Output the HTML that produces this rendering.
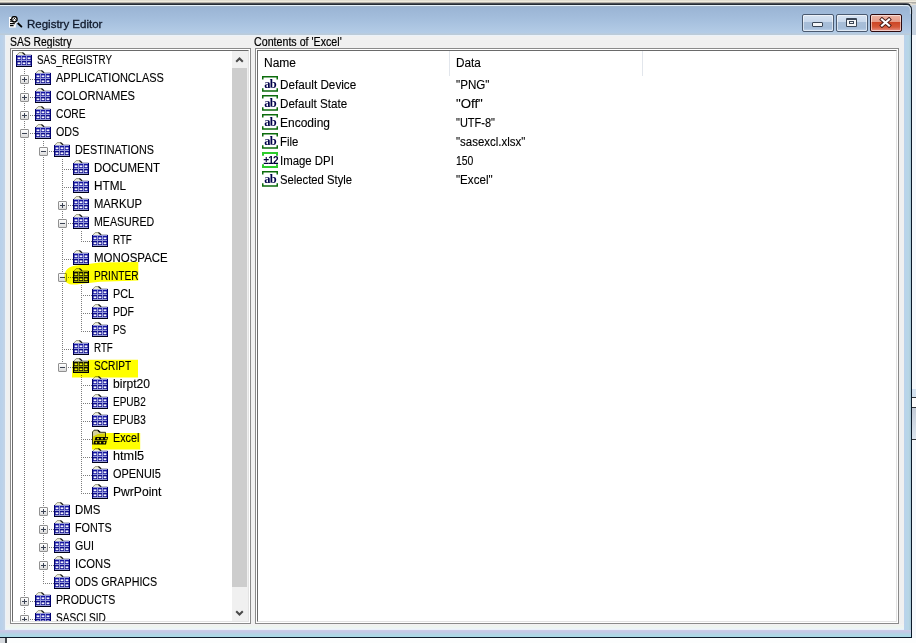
<!DOCTYPE html>
<html><head><meta charset="utf-8">
<style>
*{margin:0;padding:0;box-sizing:border-box}
html,body{width:916px;height:643px;overflow:hidden;background:#fbfdfe;font-family:"Liberation Sans",sans-serif}
.a{position:absolute}
#top{left:0;top:0;width:916px;height:6px;background:linear-gradient(#e2ded2 0px,#e2ded2 1px,#f0ecdf 1px,#f0ecdf 2px,#b4b0a8 2px,#b4b0a8 3px,#4a4e56 3px,#4a4e56 4px,#242a32 4px,#242a32 5px,#e8f4fc 5px)}
#frame{left:0;top:5px;width:912px;height:633px;background:linear-gradient(90deg,#b8d0ea 0,#bcd2ea 3px,#c4d2e4 4px,#c4d2e4 5px,transparent 5px)}
#title{left:0;top:5px;width:911px;height:30px;background:linear-gradient(#e8f4fc 0,#e8f4fc 1px,#a2b6cc 1px,#9bb5d5 3px,#a6c0de 16px,#b4cce6 28px,#bccbd8 29px,#bccbd8 30px)}
#rframe{left:904px;top:35px;width:7px;height:595px;background:linear-gradient(90deg,#c0d0e8 0,#b8d4ec 1px,#b8d6e4 5px,#a4c4d4 7px)}
#bframe{left:0;top:630px;width:911px;height:7px;background:linear-gradient(#cccce8 0,#c4c8e6 2px,#b4d4e6 4px,#a8dae6 7px)}
#rborder{left:911px;top:4px;width:1px;height:634px;background:#0c1a2a}
#bborder{left:0;top:637px;width:912px;height:1px;background:#0c1a2a}
#client{left:5px;top:35px;width:899px;height:595px;background:#f0f0f0;border-top:1px solid #eaf2fa;border-left:1px solid #e8f2fc}
.lbl{font-size:12px;color:#000;line-height:18px;white-space:nowrap;transform-origin:0 0;-webkit-text-stroke:0.2px #000}
.box{background:#fff;border:1px solid #8a8a8a}
.inner{position:absolute;left:1px;top:1px;right:1px;bottom:1px;border-top:1px solid #6a6a6a;border-left:1px solid #6a6a6a;border-right:1px solid #e3e3e3;border-bottom:1px solid #e3e3e3;background:#fff}
.t{position:absolute;font-size:12px;line-height:18px;white-space:nowrap;color:#000;transform-origin:0 0;-webkit-text-stroke:0.12px #000}
.r{position:absolute;font-size:12px;line-height:18px;white-space:nowrap;color:#000;transform-origin:0 0;-webkit-text-stroke:0.12px #000}
#treeclip{left:13px;top:51px;width:219px;height:570px;overflow:hidden}
#treeoff{position:absolute;left:-13px;top:-51px;width:300px;height:700px}
.vl{position:absolute;width:1px;background:repeating-linear-gradient(#7c7c7c 0,#7c7c7c 1px,transparent 1px,transparent 2px)}
.hl{position:absolute;height:1px;background:repeating-linear-gradient(90deg,#7c7c7c 0,#7c7c7c 1px,transparent 1px,transparent 2px)}
.exp{position:absolute;width:9px;height:9px;border:1px solid #919191;border-radius:1px;background:linear-gradient(#ffffff,#dcdcdc)}
.eh{position:absolute;left:1px;top:3px;width:5px;height:1px;background:#3a4252}
.ev{position:absolute;left:3px;top:1px;width:1px;height:5px;background:#3a4252}
.icw{position:absolute;line-height:0}
.ic{display:block}
#sb{left:232px;top:51px;width:16px;height:570px;background:#f0f0f0}
#thumb{left:232px;top:68px;width:15px;height:519px;background:#cdcdcd}
.btn{position:absolute;top:14px;height:18px;border:1px solid #4a5a70;border-radius:2px;box-shadow:inset 0 0 0 1px rgba(255,255,255,0.55)}
</style></head><body>
<svg width="0" height="0" style="position:absolute"><symbol id="ic" viewBox="0 0 16 15"><path d="M0.5 3.5 L3.2 0.6 L6.6 0.6 L9.5 3.2 Z" fill="#eeeedc"/><path d="M0.6 3.4 L3.2 0.6 L6.6 0.6" fill="none" stroke="#8c8c74" stroke-width="0.9"/><path d="M6.4 0.5 L9.6 3.3" stroke="#181818" stroke-width="1.3" fill="none"/><path d="M9.5 2.5 H15.5" stroke="#c4c4cc" stroke-width="1"/><rect x="0" y="3" width="16" height="12" fill="#00006e"/><rect x="1" y="3" width="14" height="11" fill="#9498d8"/><rect x="1" y="4" width="4" height="4" fill="#1414a0"/><rect x="6" y="4" width="4" height="4" fill="#1414a0"/><rect x="11" y="4" width="4" height="4" fill="#1414a0"/><rect x="1" y="9" width="4" height="4" fill="#0e0e8c"/><rect x="6" y="9" width="4" height="4" fill="#0e0e8c"/><rect x="11" y="9" width="4" height="4" fill="#0e0e8c"/><rect x="1.6" y="5.4" width="2.8" height="1.8" fill="#f4f4fc"/><rect x="6.6" y="5.4" width="2.8" height="1.8" fill="#f4f4fc"/><rect x="11.6" y="5.4" width="2.8" height="1.8" fill="#f4f4fc"/><rect x="1.6" y="10.4" width="2.8" height="1.8" fill="#f4f4fc"/><rect x="6.6" y="10.4" width="2.8" height="1.8" fill="#f4f4fc"/><rect x="11.6" y="10.4" width="2.8" height="1.8" fill="#f4f4fc"/><rect x="0" y="14" width="16" height="1" fill="#000018"/></symbol><symbol id="fo" viewBox="0 0 17 16"><path d="M0.5 15.5 V3 L2 1.2 H5.8 L8 3.3 H13.5 V8" fill="#d6d29c" stroke="#34341c" stroke-width="1"/><path d="M5.8 1.2 L8 3.3" stroke="#000" stroke-width="1.4"/><path d="M3.6 8 H16.2 L15.2 11.2 H2.6 Z" fill="#06062a"/><path d="M2.2 12 H14.8 L14 15.5 H1.2 Z" fill="#06062a"/><path d="M2.6 11.6 H15" stroke="#8a8a50" stroke-width="0.8"/><circle cx="6" cy="9.6" r="0.9" fill="#f4f4e8"/><circle cx="10" cy="9.6" r="0.9" fill="#f4f4e8"/><circle cx="14" cy="9.6" r="0.9" fill="#f4f4e8"/><circle cx="4.3" cy="13.6" r="0.9" fill="#f4f4e8"/><circle cx="8.3" cy="13.6" r="0.9" fill="#f4f4e8"/><circle cx="12.3" cy="13.6" r="0.9" fill="#f4f4e8"/></symbol><symbol id="ab" viewBox="0 0 16 16"><path d="M0.75 3.6 V0.75 H15.25 V3.6" fill="none" stroke="#0c6c0c" stroke-width="1.5"/><path d="M0.75 12.2 V15 H15.25 V12.2" fill="none" stroke="#0c6c0c" stroke-width="1.5"/><text x="8.2" y="11.8" text-anchor="middle" font-family="Liberation Serif" font-weight="bold" font-size="12.5" fill="#00004a" letter-spacing="-0.7">ab</text></symbol><symbol id="num" viewBox="0 0 16 16"><path d="M1 3.8 V1 H15 V3.8" fill="none" stroke="#2ccc2c" stroke-width="2"/><path d="M1 12.2 V15 H15 V12.2" fill="none" stroke="#2ccc2c" stroke-width="2"/><text x="8.6" y="11.6" text-anchor="middle" font-family="Liberation Sans" font-weight="bold" font-size="10" fill="#000038" letter-spacing="-0.8">&#177;12</text></symbol></svg>
<div id="top" class="a"></div>
<div id="frame" class="a"></div>
<div id="title" class="a"></div>
<div id="rframe" class="a"></div>
<div id="bframe" class="a"></div>
<div id="rborder" class="a"></div>
<div id="bborder" class="a"></div>
<div id="client" class="a"></div>
<div class="a" style="left:6px;top:624px;width:898px;height:6px;background:linear-gradient(#f4f0f4 0,#eef4ee 2px,#eef6f0 3px,#eef4fa 5px,#e6eefa 6px)"></div>
<div class="a" style="left:912px;top:5px;width:4px;height:30px;background:#c6d2e0"></div>
<div class="a" style="left:912px;top:35px;width:4px;height:603px;background:#f6f9fc"></div>
<div class="a" style="left:912px;top:389px;width:4px;height:9px;background:#d4e2f0"></div>
<div class="a" style="left:912px;top:397px;width:4px;height:1px;background:#303438"></div>
<div class="a" style="left:912px;top:398px;width:4px;height:9px;background:#fcfcfc"></div>
<div class="a" style="left:912px;top:407px;width:4px;height:1px;background:#303438"></div>
<div class="a" style="left:912px;top:408px;width:4px;height:31px;background:linear-gradient(#c4ccd8,#dce6f0)"></div>
<div class="a" style="left:912px;top:439px;width:4px;height:1px;background:#303438"></div>
<div class="a" style="left:0;top:638px;width:5px;height:5px;background:#d6dadf"></div>
<div class="a" style="left:5px;top:638px;width:2px;height:5px;background:#45494e"></div>
<div class="a" style="left:7px;top:638px;width:909px;height:5px;background:#fdfefe"></div>

<svg class="a" style="left:903px;top:0px" width="13" height="14" viewBox="0 0 13 14">
<path d="M0 3 H3 Q8.5 3 8.5 8.5 V14 H13 V3 Z" fill="#e4e0d6"/>
<path d="M8.6 5 V14 H13 V5 Z" fill="#c6d2e0"/>
<path d="M8.6 3 H13" stroke="#a8a8a4" stroke-width="1"/>
<path d="M0 4.5 H3 Q8.5 4.5 8.5 10 V14" fill="none" stroke="#18202a" stroke-width="1.2"/>
<path d="M0 5.6 H3 Q7.4 5.6 7.4 10 V14" fill="none" stroke="#dceaf6" stroke-width="0.9"/>
</svg>
<!-- title icon -->
<svg class="a" style="left:9px;top:16px" width="14" height="12" viewBox="0 0 14 12">
<rect x="0" y="1" width="6.8" height="10.6" fill="#fcfcfc"/>
<path d="M1 3.6 H2.2 M1 5.3 H3 M1 7.6 H5.8 M1 9.6 H4.6" stroke="#000" stroke-width="1.1"/>
<circle cx="5.4" cy="3.3" r="2.7" fill="#fafafa" stroke="#000" stroke-width="1.3"/>
<circle cx="4.3" cy="3.7" r="0.55" fill="#000"/><circle cx="6.5" cy="3.7" r="0.55" fill="#000"/><circle cx="5.4" cy="2.4" r="0.55" fill="#000"/>
<path d="M8.9 7.3 L12.4 10.6" stroke="#000" stroke-width="1.9" stroke-linecap="round"/>
<path d="M7.4 5.9 L8.7 7.1" stroke="#e8eef4" stroke-width="1.4"/>
</svg>
<div class="a" style="left:27px;top:14.5px;font-size:11.5px;line-height:18px;color:#101a2c;white-space:nowrap;-webkit-text-stroke:0.3px #101a2c">Registry Editor</div>

<!-- window buttons -->
<div class="btn" style="left:802px;width:32px;background:linear-gradient(#d8e4f2 0,#c8d8ec 7px,#a8bed8 7px,#a4bcd8 13px,#c0d4ec 16px)"></div>
<div class="btn" style="left:836px;width:32px;background:linear-gradient(#d8e4f2 0,#c8d8ec 7px,#a8bed8 7px,#a4bcd8 13px,#c0d4ec 16px)"></div>
<div class="btn" style="left:870px;width:32px;border-color:#2c0a0e;background:linear-gradient(#eeb4a4 0,#e49a86 7px,#cc4424 7px,#d45838 12px,#e8948a 16px)"></div>
<div class="a" style="left:812px;top:22px;width:11px;height:5px;border:1px solid #3a4656;border-radius:1px;background:#f4f6f8"></div>
<div class="a" style="left:846px;top:18px;width:11px;height:9px;border:1px solid #3a4656;border-top-width:2px;border-radius:1px;background:#f4f6f8"><div class="a" style="left:2px;top:1px;width:5px;height:3px;border:1px solid #3a4656"></div></div>
<svg class="a" style="left:879px;top:17px" width="13" height="11" viewBox="0 0 13 11">
<path d="M3 2.5 L10 8.5 M10 2.5 L3 8.5" stroke="#4a1a14" stroke-width="4" stroke-linecap="square"/>
<path d="M3 2.5 L10 8.5 M10 2.5 L3 8.5" stroke="#ffffff" stroke-width="2.2" stroke-linecap="square"/>
</svg>

<!-- labels -->
<div class="a lbl" style="left:10px;top:33px;transform:scaleX(0.863)">SAS Registry</div>
<div class="a lbl" style="left:254px;top:33px;transform:scaleX(0.889)">Contents of 'Excel'</div>

<!-- left box -->
<div class="a box" style="left:10px;top:48px;width:241px;height:576px"><div class="inner"></div></div>
<!-- right box -->
<div class="a box" style="left:255px;top:48px;width:644px;height:576px"><div class="inner"></div></div>

<!-- tree -->
<div id="treeclip" class="a"><div id="treeoff">
<div class="vl" style="left:24px;top:69px;height:632px"></div>
<div class="vl" style="left:43px;top:141px;height:443px"></div>
<div class="vl" style="left:62px;top:159px;height:209px"></div>
<div class="vl" style="left:81px;top:231px;height:11px"></div>
<div class="vl" style="left:81px;top:285px;height:47px"></div>
<div class="vl" style="left:81px;top:375px;height:119px"></div>
<div class="hl" style="left:26px;top:79px;width:9px"></div>
<div class="exp" style="left:20px;top:75px"><div class="eh"></div><div class="ev"></div></div>
<div class="hl" style="left:26px;top:97px;width:9px"></div>
<div class="exp" style="left:20px;top:93px"><div class="eh"></div><div class="ev"></div></div>
<div class="hl" style="left:26px;top:115px;width:9px"></div>
<div class="exp" style="left:20px;top:111px"><div class="eh"></div><div class="ev"></div></div>
<div class="hl" style="left:26px;top:133px;width:9px"></div>
<div class="exp" style="left:20px;top:129px"><div class="eh"></div></div>
<div class="hl" style="left:45px;top:151px;width:9px"></div>
<div class="exp" style="left:39px;top:147px"><div class="eh"></div></div>
<div class="hl" style="left:64px;top:169px;width:9px"></div>
<div class="hl" style="left:64px;top:187px;width:9px"></div>
<div class="hl" style="left:64px;top:205px;width:9px"></div>
<div class="exp" style="left:58px;top:201px"><div class="eh"></div><div class="ev"></div></div>
<div class="hl" style="left:64px;top:223px;width:9px"></div>
<div class="exp" style="left:58px;top:219px"><div class="eh"></div></div>
<div class="hl" style="left:83px;top:241px;width:9px"></div>
<div class="hl" style="left:64px;top:259px;width:9px"></div>
<div class="hl" style="left:64px;top:277px;width:9px"></div>
<div class="exp" style="left:58px;top:273px"><div class="eh"></div></div>
<div class="hl" style="left:83px;top:295px;width:9px"></div>
<div class="hl" style="left:83px;top:313px;width:9px"></div>
<div class="hl" style="left:83px;top:331px;width:9px"></div>
<div class="hl" style="left:64px;top:349px;width:9px"></div>
<div class="hl" style="left:64px;top:367px;width:9px"></div>
<div class="exp" style="left:58px;top:363px"><div class="eh"></div></div>
<div class="hl" style="left:83px;top:385px;width:9px"></div>
<div class="hl" style="left:83px;top:403px;width:9px"></div>
<div class="hl" style="left:83px;top:421px;width:9px"></div>
<div class="hl" style="left:83px;top:439px;width:9px"></div>
<div class="hl" style="left:83px;top:457px;width:9px"></div>
<div class="hl" style="left:83px;top:475px;width:9px"></div>
<div class="hl" style="left:83px;top:493px;width:9px"></div>
<div class="hl" style="left:45px;top:511px;width:9px"></div>
<div class="exp" style="left:39px;top:507px"><div class="eh"></div><div class="ev"></div></div>
<div class="hl" style="left:45px;top:529px;width:9px"></div>
<div class="exp" style="left:39px;top:525px"><div class="eh"></div><div class="ev"></div></div>
<div class="hl" style="left:45px;top:547px;width:9px"></div>
<div class="exp" style="left:39px;top:543px"><div class="eh"></div><div class="ev"></div></div>
<div class="hl" style="left:45px;top:565px;width:9px"></div>
<div class="exp" style="left:39px;top:561px"><div class="eh"></div><div class="ev"></div></div>
<div class="hl" style="left:45px;top:583px;width:9px"></div>
<div class="hl" style="left:26px;top:601px;width:9px"></div>
<div class="exp" style="left:20px;top:597px"><div class="eh"></div><div class="ev"></div></div>
<div class="hl" style="left:26px;top:619px;width:9px"></div>
<div class="exp" style="left:20px;top:615px"><div class="eh"></div><div class="ev"></div></div>
<div class="hl" style="left:26px;top:637px;width:9px"></div>
<div class="exp" style="left:20px;top:633px"><div class="eh"></div><div class="ev"></div></div>
<svg class="a" style="left:16px;top:52px" width="16" height="15"><use href="#ic"/></svg>
<div class="t" style="left:37px;top:51px;transform:scaleX(0.817)">SAS_REGISTRY</div>
<svg class="a" style="left:35px;top:70px" width="16" height="15"><use href="#ic"/></svg>
<div class="t" style="left:56px;top:69px;transform:scaleX(0.916)">APPLICATIONCLASS</div>
<svg class="a" style="left:35px;top:88px" width="16" height="15"><use href="#ic"/></svg>
<div class="t" style="left:56px;top:87px;transform:scaleX(0.926)">COLORNAMES</div>
<svg class="a" style="left:35px;top:106px" width="16" height="15"><use href="#ic"/></svg>
<div class="t" style="left:56px;top:105px;transform:scaleX(0.852)">CORE</div>
<svg class="a" style="left:35px;top:124px" width="16" height="15"><use href="#ic"/></svg>
<div class="t" style="left:56px;top:123px;transform:scaleX(0.892)">ODS</div>
<svg class="a" style="left:54px;top:142px" width="16" height="15"><use href="#ic"/></svg>
<div class="t" style="left:75px;top:141px;transform:scaleX(0.899)">DESTINATIONS</div>
<svg class="a" style="left:73px;top:160px" width="16" height="15"><use href="#ic"/></svg>
<div class="t" style="left:94px;top:159px;transform:scaleX(0.951)">DOCUMENT</div>
<svg class="a" style="left:73px;top:178px" width="16" height="15"><use href="#ic"/></svg>
<div class="t" style="left:94px;top:177px;transform:scaleX(0.979)">HTML</div>
<svg class="a" style="left:73px;top:196px" width="16" height="15"><use href="#ic"/></svg>
<div class="t" style="left:94px;top:195px;transform:scaleX(0.934)">MARKUP</div>
<svg class="a" style="left:73px;top:214px" width="16" height="15"><use href="#ic"/></svg>
<div class="t" style="left:94px;top:213px;transform:scaleX(0.885)">MEASURED</div>
<svg class="a" style="left:92px;top:232px" width="16" height="15"><use href="#ic"/></svg>
<div class="t" style="left:113px;top:231px;transform:scaleX(0.814)">RTF</div>
<svg class="a" style="left:73px;top:250px" width="16" height="15"><use href="#ic"/></svg>
<div class="t" style="left:94px;top:249px;transform:scaleX(0.956)">MONOSPACE</div>
<svg class="a" style="left:73px;top:268px" width="16" height="15"><use href="#ic"/></svg>
<div class="t" style="left:94px;top:267px;transform:scaleX(0.846)">PRINTER</div>
<svg class="a" style="left:92px;top:286px" width="16" height="15"><use href="#ic"/></svg>
<div class="t" style="left:113px;top:285px;transform:scaleX(0.9)">PCL</div>
<svg class="a" style="left:92px;top:304px" width="16" height="15"><use href="#ic"/></svg>
<div class="t" style="left:113px;top:303px;transform:scaleX(0.874)">PDF</div>
<svg class="a" style="left:92px;top:322px" width="16" height="15"><use href="#ic"/></svg>
<div class="t" style="left:113px;top:321px;transform:scaleX(0.826)">PS</div>
<svg class="a" style="left:73px;top:340px" width="16" height="15"><use href="#ic"/></svg>
<div class="t" style="left:94px;top:339px;transform:scaleX(0.814)">RTF</div>
<svg class="a" style="left:73px;top:358px" width="16" height="15"><use href="#ic"/></svg>
<div class="t" style="left:94px;top:357px;transform:scaleX(0.844)">SCRIPT</div>
<svg class="a" style="left:92px;top:376px" width="16" height="15"><use href="#ic"/></svg>
<div class="t" style="left:113px;top:375px;transform:scaleX(1.009)">birpt20</div>
<svg class="a" style="left:92px;top:394px" width="16" height="15"><use href="#ic"/></svg>
<div class="t" style="left:113px;top:393px;transform:scaleX(0.834)">EPUB2</div>
<svg class="a" style="left:92px;top:412px" width="16" height="15"><use href="#ic"/></svg>
<div class="t" style="left:113px;top:411px;transform:scaleX(0.834)">EPUB3</div>
<svg class="a" style="left:92px;top:429px" width="17" height="16"><use href="#fo"/></svg>
<div class="t" style="left:113px;top:429px;transform:scaleX(0.9)">Excel</div>
<svg class="a" style="left:92px;top:448px" width="16" height="15"><use href="#ic"/></svg>
<div class="t" style="left:113px;top:447px;transform:scaleX(1.058)">html5</div>
<svg class="a" style="left:92px;top:466px" width="16" height="15"><use href="#ic"/></svg>
<div class="t" style="left:113px;top:465px;transform:scaleX(0.909)">OPENUI5</div>
<svg class="a" style="left:92px;top:484px" width="16" height="15"><use href="#ic"/></svg>
<div class="t" style="left:113px;top:483px;transform:scaleX(1.008)">PwrPoint</div>
<svg class="a" style="left:54px;top:502px" width="16" height="15"><use href="#ic"/></svg>
<div class="t" style="left:75px;top:501px;transform:scaleX(0.955)">DMS</div>
<svg class="a" style="left:54px;top:520px" width="16" height="15"><use href="#ic"/></svg>
<div class="t" style="left:75px;top:519px;transform:scaleX(0.9)">FONTS</div>
<svg class="a" style="left:54px;top:538px" width="16" height="15"><use href="#ic"/></svg>
<div class="t" style="left:75px;top:537px;transform:scaleX(0.885)">GUI</div>
<svg class="a" style="left:54px;top:556px" width="16" height="15"><use href="#ic"/></svg>
<div class="t" style="left:75px;top:555px;transform:scaleX(0.938)">ICONS</div>
<svg class="a" style="left:54px;top:574px" width="16" height="15"><use href="#ic"/></svg>
<div class="t" style="left:75px;top:573px;transform:scaleX(0.894)">ODS GRAPHICS</div>
<svg class="a" style="left:35px;top:592px" width="16" height="15"><use href="#ic"/></svg>
<div class="t" style="left:56px;top:591px;transform:scaleX(0.88)">PRODUCTS</div>
<svg class="a" style="left:35px;top:610px" width="16" height="15"><use href="#ic"/></svg>
<div class="t" style="left:56px;top:609px;transform:scaleX(0.84)">SASCLSID</div>
<svg class="a" style="left:35px;top:628px" width="16" height="15"><use href="#ic"/></svg>
<div class="t" style="left:56px;top:627px;transform:scaleX(0.88)">SASHELP</div>
</div></div>

<!-- highlights -->
<div class="a" style="left:0;top:0;width:916px;height:643px;mix-blend-mode:multiply;pointer-events:none">
<svg width="916" height="643" style="position:absolute;left:0;top:0">
<path d="M64.5 277 C64.5 269.5 68.5 266.8 76 265.5 L100 262.5 L138.3 262 L138.3 280.5 L100 281.8 L80 284 C70 285.6 64.5 284 64.5 277 Z" fill="#ffff00"/>
<path d="M72.5 361.5 L88 361.5 L88 359.8 L138 359.8 L138 377.5 L72 377.5 Z" fill="#ffff00"/>
<path d="M92 437 L98 434 L108 433 L140.2 433 L140.2 449.5 L92 449.5 Z" fill="#ffff00"/>
</svg>
</div>

<!-- scrollbar -->
<div id="sb" class="a"></div>
<div id="thumb" class="a"></div>
<svg class="a" style="left:235px;top:57px" width="9" height="6" viewBox="0 0 9 6"><path d="M1.2 4.8 L4.5 1.5 L7.8 4.8" stroke="#4a4a4a" stroke-width="2" fill="none"/></svg>
<svg class="a" style="left:235px;top:610px" width="9" height="6" viewBox="0 0 9 6"><path d="M1.2 1.2 L4.5 4.5 L7.8 1.2" stroke="#4a4a4a" stroke-width="2" fill="none"/></svg>

<!-- right list -->
<div class="r" style="left:264px;top:53.5px;transform:scaleX(1.0)">Name</div>
<div class="r" style="left:456px;top:53.5px;transform:scaleX(0.98)">Data</div>
<div class="a" style="left:449px;top:51px;width:1px;height:25px;background:#e2e6ec"></div>
<div class="a" style="left:642px;top:51px;width:1px;height:25px;background:#e2e6ec"></div>
<svg class="a" style="left:262px;top:76px" width="16" height="16"><use href="#ab"/></svg>
<div class="r" style="left:280px;top:75.5px;transform:scaleX(0.977)">Default Device</div>
<div class="r" style="left:456px;top:75.5px;transform:scaleX(0.969)">&quot;PNG&quot;</div>
<svg class="a" style="left:262px;top:95px" width="16" height="16"><use href="#ab"/></svg>
<div class="r" style="left:280px;top:94.5px;transform:scaleX(0.968)">Default State</div>
<div class="r" style="left:456px;top:94.5px;transform:scaleX(1.103)">&quot;Off&quot;</div>
<svg class="a" style="left:262px;top:114px" width="16" height="16"><use href="#ab"/></svg>
<div class="r" style="left:280px;top:113.5px;transform:scaleX(0.999)">Encoding</div>
<div class="r" style="left:456px;top:113.5px;transform:scaleX(0.915)">&quot;UTF-8&quot;</div>
<svg class="a" style="left:262px;top:133px" width="16" height="16"><use href="#ab"/></svg>
<div class="r" style="left:280px;top:132.5px;transform:scaleX(0.949)">File</div>
<div class="r" style="left:456px;top:132.5px;transform:scaleX(0.956)">&quot;sasexcl.xlsx&quot;</div>
<svg class="a" style="left:262px;top:152px" width="16" height="16"><use href="#num"/></svg>
<div class="r" style="left:280px;top:151.5px;transform:scaleX(0.95)">Image DPI</div>
<div class="r" style="left:456px;top:151.5px;transform:scaleX(0.867)">150</div>
<svg class="a" style="left:262px;top:171px" width="16" height="16"><use href="#ab"/></svg>
<div class="r" style="left:280px;top:170.5px;transform:scaleX(0.94)">Selected Style</div>
<div class="r" style="left:456px;top:170.5px;transform:scaleX(0.966)">&quot;Excel&quot;</div>

</body></html>
